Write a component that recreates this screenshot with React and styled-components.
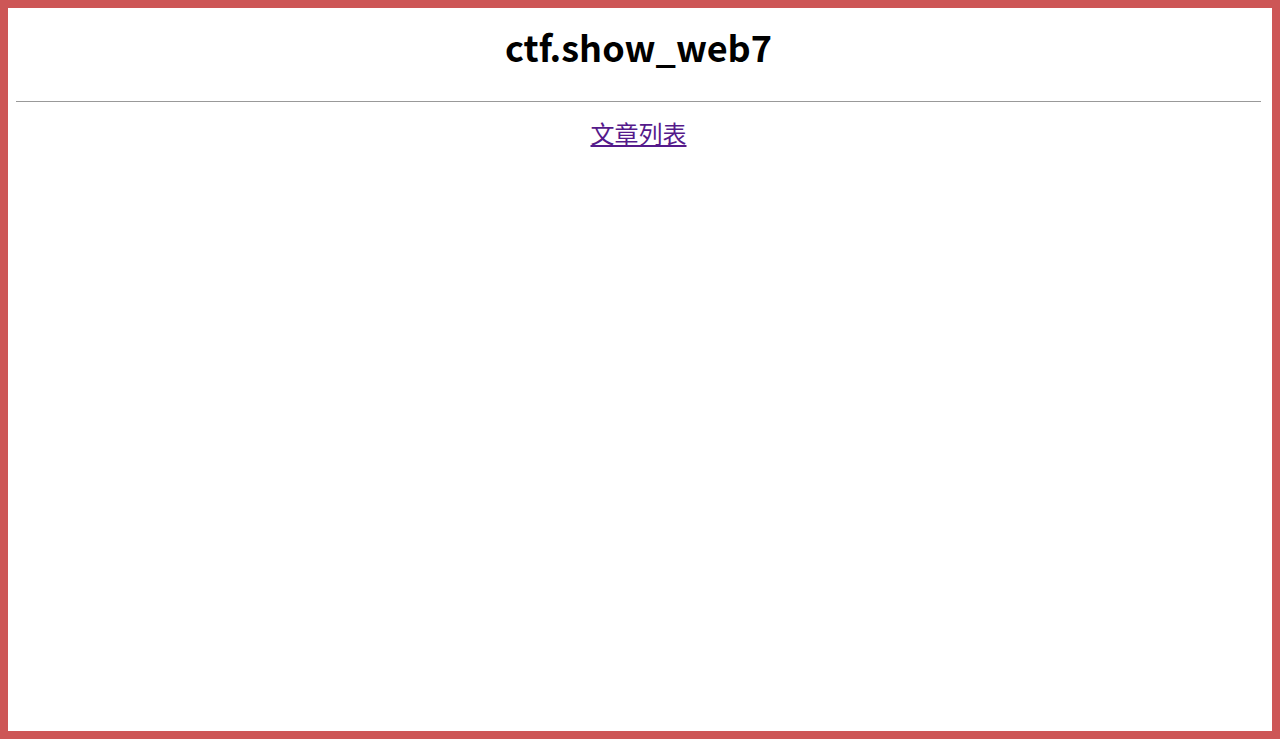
import React from 'react';
import styled, { createGlobalStyle } from 'styled-components';

const GlobalStyle = createGlobalStyle`
  html {
    background: #cd5656;
  }
  body {
    margin: 8px;
    font-family: "Noto Sans CJK SC", "Noto Sans", sans-serif;
  }
`;

const Page = styled.div`
  background: #fff;
  height: calc(100vh - 16px);
  box-sizing: border-box;
  padding: 0 11px 0 8px;
  overflow: hidden;
`;

const Title = styled.h1`
  margin: 0;
  padding: 16px 0 33px;
  text-align: center;
  font-size: 36px;
  font-weight: 700;
  line-height: 44px;
  color: #000;
`;

const Rule = styled.hr`
  margin: 0;
  border: 0;
  border-top: 1px solid #999;
`;

const Nav = styled.div`
  text-align: center;
  padding-top: 15px;
  font-size: 24px;
  line-height: 32px;
`;

const Link = styled.a`
  color: #551a8b;
  text-decoration: underline;
`;

export default function App() {
  return (
    <>
      <GlobalStyle />
      <Page>
        <Title>ctf.show_web7</Title>
        <Rule />
        <Nav>
          <Link href="#">文章列表</Link>
        </Nav>
      </Page>
    </>
  );
}
